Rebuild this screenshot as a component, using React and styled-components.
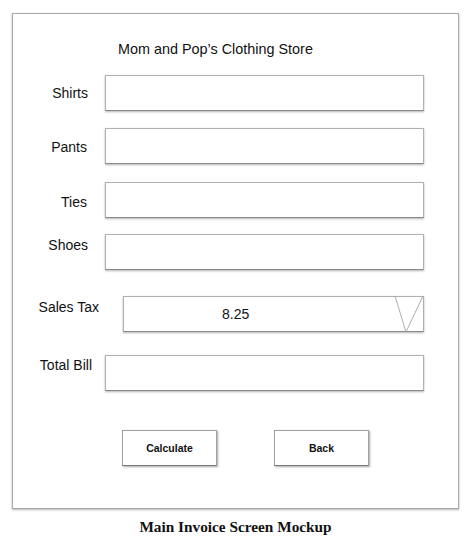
import React from 'react'
import styled, { createGlobalStyle } from 'styled-components'

const GlobalStyle = createGlobalStyle`
body {
  margin: 0;
  background: #fff;
  font-family: "Liberation Sans", Arial, sans-serif;
  color: #111;
}
`

const Page = styled.div`
width: 474px;
padding: 13px 0 0 12px;
box-sizing: border-box;
`
const Frame = styled.div`
width: 447px;
height: 496px;
box-sizing: border-box;
border: 1px solid #a8a8a8;
box-shadow: 0 1px 2px rgba(0,0,0,0.3);
display: flex;
flex-direction: column;
`
const Title = styled.div`
margin: 26px 0 0 105px;
font-size: 14.4px;
line-height: 18px;
`
const Row = styled.div`
display: grid;
grid-template-columns: 92px auto;
align-items: start;
margin-top: ${p => p.$gap}px;
`
const Label = styled.div`
text-align: right;
font-size: 14px;
line-height: 20px;
padding-right: ${p => p.$end}px;
padding-top: ${p => p.$top}px;
white-space: nowrap;
`
const Field = styled.div`
position: relative;
width: ${p => p.$width || 319}px;
height: 36px;
margin-left: ${p => p.$shift || 0}px;
box-sizing: border-box;
border: 1px solid #b0b0b0;
border-bottom-color: #8a8a8a;
box-shadow: 0 1px 2px rgba(0,0,0,0.3);
background: #fff;
`
const Value = styled.div`
padding-left: 98px;
font-size: 14px;
line-height: 35px;
`
const Arrow = styled.svg`
position: absolute;
top: -1px;
right: -1px;
`
const Buttons = styled.div`
display: flex;
gap: 57px;
margin: 39px 0 0 109px;
`
const Button = styled.div`
width: 95px;
height: 36px;
box-sizing: border-box;
border: 1px solid #a0a0a0;
border-bottom-color: #777;
box-shadow: 1px 1px 2px rgba(0,0,0,0.35);
display: flex;
align-items: center;
justify-content: center;
font-size: 10.5px;
font-weight: bold;
`
const Caption = styled.div`
width: 447px;
margin-top: 9px;
text-align: center;
font-family: "Liberation Serif", "Times New Roman", serif;
font-weight: bold;
font-size: 15.3px;
line-height: 18px;
`

const rows = [
    { label: 'Shirts', gap: 17, end: 17, top: 8 },
    { label: 'Pants', gap: 17, end: 18, top: 9 },
    { label: 'Ties', gap: 18, end: 18, top: 10 },
    { label: 'Shoes', gap: 16, end: 17, top: 1 },
]

const App = () => {
    return (
        <Page>
            <GlobalStyle />
            <Frame>
                <Title>Mom and Pop’s Clothing Store</Title>
                {rows.map(r => (
                    <Row key={r.label} $gap={r.gap}>
                        <Label $end={r.end} $top={r.top}>{r.label}</Label>
                        <Field />
                    </Row>
                ))}
                <Row $gap={26}>
                    <Label $end={6} $top={1}>Sales Tax</Label>
                    <Field $width={301} $shift={18}>
                        <Value>8.25</Value>
                        <Arrow width="30" height="36" viewBox="0 0 30 36">
                            <polyline points="1,0 12,36 29,0" fill="none" stroke="#9a9a9a" strokeWidth="0.8" />
                        </Arrow>
                    </Field>
                </Row>
                <Row $gap={23}>
                    <Label $end={13} $top={0}>Total Bill</Label>
                    <Field />
                </Row>
                <Buttons>
                    <Button>Calculate</Button>
                    <Button>Back</Button>
                </Buttons>
            </Frame>
            <Caption>Main Invoice Screen Mockup</Caption>
        </Page>
    )
}

export default App
